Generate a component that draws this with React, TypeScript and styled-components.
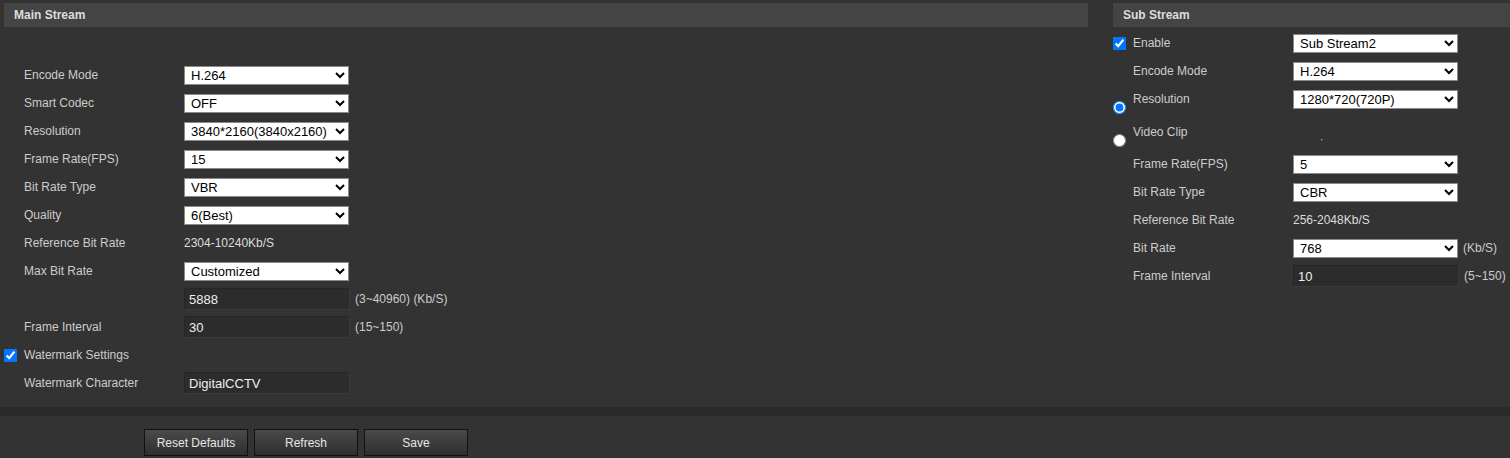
import styled, { createGlobalStyle } from "styled-components";

const GlobalStyle = createGlobalStyle`
    body {
        margin: 0;
        background: #333333;
        font-family: "Liberation Sans", Arial, sans-serif;
    }
`;

type Field =
    | { kind: "select"; label: string; value: string; hint?: string }
    | { kind: "input"; label: string; value: string; hint?: string }
    | { kind: "text"; label: string; value: string };

const mainFields: Field[] = [
    { kind: "select", label: "Encode Mode", value: "H.264" },
    { kind: "select", label: "Smart Codec", value: "OFF" },
    { kind: "select", label: "Resolution", value: "3840*2160(3840x2160)" },
    { kind: "select", label: "Frame Rate(FPS)", value: "15" },
    { kind: "select", label: "Bit Rate Type", value: "VBR" },
    { kind: "select", label: "Quality", value: "6(Best)" },
    { kind: "text", label: "Reference Bit Rate", value: "2304-10240Kb/S" },
    { kind: "select", label: "Max Bit Rate", value: "Customized" },
    { kind: "input", label: "", value: "5888", hint: "(3~40960) (Kb/S)" },
    { kind: "input", label: "Frame Interval", value: "30", hint: "(15~150)" },
];

const subFieldsTail: Field[] = [
    { kind: "select", label: "Frame Rate(FPS)", value: "5" },
    { kind: "select", label: "Bit Rate Type", value: "CBR" },
    { kind: "text", label: "Reference Bit Rate", value: "256-2048Kb/S" },
    { kind: "select", label: "Bit Rate", value: "768", hint: "(Kb/S)" },
    { kind: "input", label: "Frame Interval", value: "10", hint: "(5~150)" },
];

function Control({ field }: { field: Field }) {
    if (field.kind === "text") {
        return <Value>{field.value}</Value>;
    }
    return (
        <>
            {field.kind === "select" ? (
                <Select defaultValue={field.value}>
                    <option value={field.value}>{field.value}</option>
                </Select>
            ) : (
                <TextInput defaultValue={field.value} />
            )}
            {field.hint && <Hint>{field.hint}</Hint>}
        </>
    );
}

function FieldRow({ field }: { field: Field }) {
    return (
        <Row>
            <Mark />
            <Label>{field.label}</Label>
            <Control field={field} />
        </Row>
    );
}

export default function App() {
    return (
        <Page>
            <GlobalStyle />
            <Columns>
                <MainPane>
                    <Header>Main Stream</Header>
                    <MainBody>
                        {mainFields.map((f, i) => (
                            <FieldRow key={i} field={f} />
                        ))}
                        <Row>
                            <Mark>
                                <Check type="checkbox" defaultChecked />
                            </Mark>
                            <Label>Watermark Settings</Label>
                        </Row>
                        <FieldRow field={{ kind: "input", label: "Watermark Character", value: "DigitalCCTV" }} />
                    </MainBody>
                </MainPane>
                <SubPane>
                    <Header>Sub Stream</Header>
                    <SubBody>
                        <Row>
                            <Mark>
                                <Check type="checkbox" defaultChecked />
                            </Mark>
                            <Label>Enable</Label>
                            <Control field={{ kind: "select", label: "", value: "Sub Stream2" }} />
                        </Row>
                        <FieldRow field={{ kind: "select", label: "Encode Mode", value: "H.264" }} />
                        <Row>
                            <Mark $top={16}>
                                <Check type="radio" name="clip" defaultChecked />
                            </Mark>
                            <Label>Resolution</Label>
                            <Control field={{ kind: "select", label: "", value: "1280*720(720P)" }} />
                        </Row>
                        <ClipRow>
                            <Mark $top={21}>
                                <Check type="radio" name="clip" />
                            </Mark>
                            <Label>Video Clip</Label>
                            <Tick>'</Tick>
                        </ClipRow>
                        {subFieldsTail.map((f, i) => (
                            <FieldRow key={i} field={f} />
                        ))}
                    </SubBody>
                </SubPane>
            </Columns>
            <Divider />
            <ButtonBar>
                <Button>Reset Defaults</Button>
                <Button>Refresh</Button>
                <Button>Save</Button>
            </ButtonBar>
        </Page>
    );
}

const Page = styled.div`
    width: 1510px;
    height: 458px;
    background: #333333;
    display: flex;
    flex-direction: column;
    overflow: hidden;
`;
const Columns = styled.div`
    display: flex;
    align-items: flex-start;
    padding: 3px 0 0 4px;
    gap: 25px;
`;
const MainPane = styled.section`
    width: 1084px;
`;
const SubPane = styled.section`
    flex: 1;
`;
const Header = styled.div`
    height: 24px;
    line-height: 24px;
    padding-left: 10px;
    background: #444444;
    color: #dddddd;
    font-size: 12px;
    font-weight: bold;
`;
const MainBody = styled.div`
    padding-top: 34px;
`;
const SubBody = styled.div`
    padding-top: 2px;
`;
const Row = styled.div`
    display: flex;
    align-items: center;
    height: 28px;
`;
const ClipRow = styled(Row)`
    height: 37px;
    align-items: flex-start;
    padding-top: 12px;
    box-sizing: border-box;
`;
const Mark = styled.div<{ $top?: number }>`
    width: 20px;
    flex: none;
    display: flex;
    align-self: ${({ $top }) => ($top ? "flex-start" : "center")};
    margin-top: ${({ $top }) => ($top ? `${$top}px` : "0")};
    ${ClipRow} & {
        margin-top: ${({ $top }) => ($top ? `${$top - 12}px` : "0")};
    }
`;
const Check = styled.input`
    margin: 0;
    width: 13px;
    height: 13px;
    accent-color: #0075ff;
`;
const Label = styled.span`
    width: 160px;
    flex: none;
    color: #cccccc;
    font-size: 12px;
    line-height: 14px;
`;
const Value = styled.span`
    color: #dddddd;
    font-size: 12px;
`;
const Select = styled.select`
    width: 165px;
    height: 19px;
    box-sizing: border-box;
    margin: 0;
    padding: 0 0 0 2px;
    border: 1px solid #8a8a8a;
    border-radius: 0;
    background: #ffffff;
    color: #000000;
    font-family: "Liberation Sans", Arial, sans-serif;
    font-size: 13px;
`;
const TextInput = styled.input`
    width: 166px;
    height: 22px;
    box-sizing: border-box;
    margin: 0;
    padding: 0 4px;
    border: 1px solid #262626;
    border-right-color: #3a3a3a;
    border-bottom-color: #3a3a3a;
    background: #2c2c2c;
    color: #eeeeee;
    font-family: "Liberation Sans", Arial, sans-serif;
    font-size: 13px;
    outline: none;
`;
const Hint = styled.span`
    margin-left: 5px;
    color: #cccccc;
    font-size: 12px;
`;
const Tick = styled.span`
    margin: 12px 0 0 28px;
    color: #eeeeee;
    font-size: 8px;
`;
const Divider = styled.div`
    height: 9px;
    margin-top: 10px;
    background: #2a2a2a;
`;
const ButtonBar = styled.div`
    display: flex;
    gap: 6px;
    padding-left: 144px;
    margin-top: 13px;
`;
const Button = styled.button`
    width: 104px;
    height: 27px;
    margin: 0;
    padding: 0;
    border: 1px solid #111111;
    border-radius: 0;
    background: linear-gradient(#4a4a4a, #2f2f2f);
    color: #e6e6e6;
    font-family: "Liberation Sans", Arial, sans-serif;
    font-size: 12px;
`;
